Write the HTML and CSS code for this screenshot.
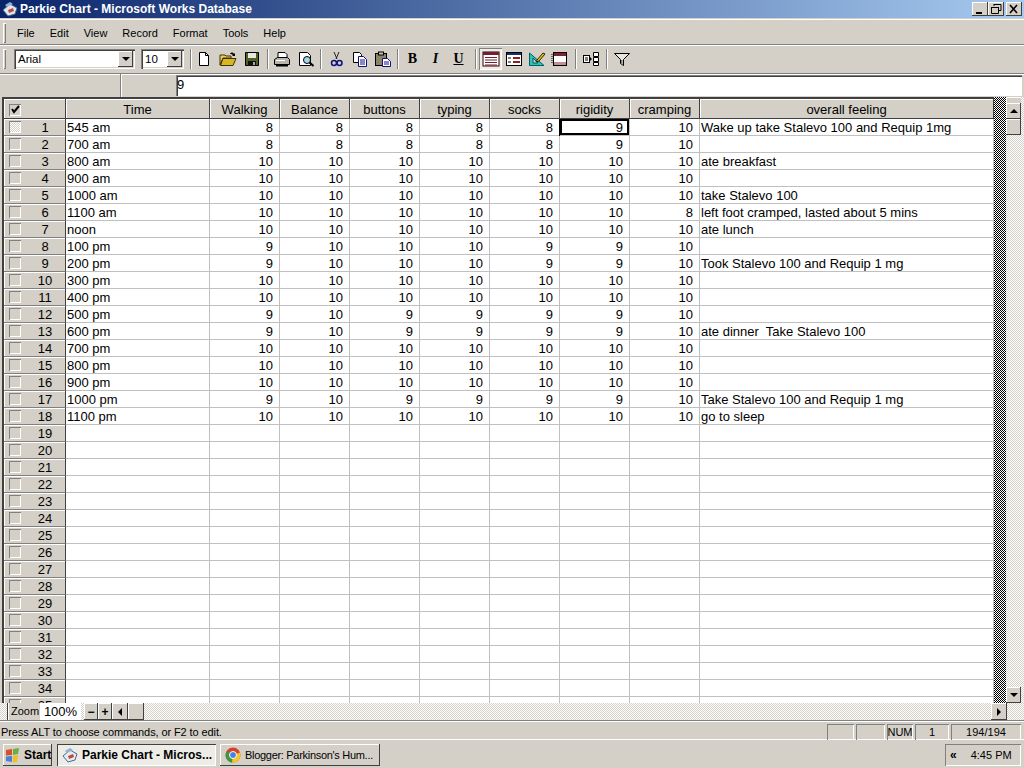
FILE: index.html
```html
<!DOCTYPE html>
<html lang="en">
<head>
<meta charset="utf-8">
<title>Parkie Chart - Microsoft Works Database</title>
<link rel="stylesheet" href="styles.css">
</head>
<body>
<div class="app">
  <header class="titlebar">
    <svg class="app-icon" viewBox="0 0 16 16"><path d="M1 9 8 3l7 4-2 6-7 2z" fill="#dfe6ee" stroke="#4a6a8a"/><path d="M3 4l5-3 3 2-6 3z" fill="#8fb0d0"/><path d="M6 9l5-2 1 3-5 2z" fill="#c04a3a"/></svg>
    <span class="title-text">Parkie Chart - Microsoft Works Database</span>
    <div class="win-btns">
      <span class="win-btn"><svg viewBox="0 0 16 14"><rect x="4" y="10" width="6" height="2" fill="#000"/></svg></span>
      <span class="win-btn"><svg viewBox="0 0 16 14"><path d="M6 2.500h7v6h-2M6 2v2M3.500 5.500h7v6h-7z" fill="none" stroke="#000"/><path d="M6 2h7v1H6zM3 5h8v1H3z"/></svg></span>
      <span class="win-btn win-btn-close"><svg viewBox="0 0 16 14"><path d="M4 3l7 8M11 3l-7 8" stroke="#000" stroke-width="1.600"/></svg></span>
    </div>
  </header>

  <nav class="menubar">
    <span class="grip"></span>
    <span class="menu-item m-file">File</span>
    <span class="menu-item">Edit</span>
    <span class="menu-item">View</span>
    <span class="menu-item">Record</span>
    <span class="menu-item">Format</span>
    <span class="menu-item">Tools</span>
    <span class="menu-item">Help</span>
  </nav>

  <div class="toolbar">
    <span class="grip"></span>
    <div class="combo combo-font"><span class="combo-val">Arial</span><span class="combo-arrow"><i></i></span></div>
    <div class="combo combo-size"><span class="combo-val">10</span><span class="combo-arrow"><i></i></span></div>
    <span class="sep sep-a"></span>
    <span class="tool t24"><svg viewBox="0 0 18 16"><path d="M4.500 1.500h6l3 3v10h-9z" fill="#fff" stroke="#000"/><path d="M10.500 1.500v3h3" fill="none" stroke="#000"/></svg></span>
    <span class="tool t24"><svg viewBox="0 0 18 16"><path d="M1 4h5l1 1h5v2H4l-3 7z" fill="#e8d060" stroke="#403000"/><path d="M1.500 14.500 4 7.500h13l-3 7z" fill="#d8b820" stroke="#403000"/><path d="M11 3c1-2 3-2 4 0l1-1v3h-3l1-1c-1-1-2-1-3-1z" fill="#000"/></svg></span>
    <span class="tool t24"><svg viewBox="0 0 18 16"><path d="M2.500 1.500h13v13h-13z" fill="#506020" stroke="#000"/><rect x="5" y="2" width="8" height="5" fill="#e8e8e0"/><rect x="5" y="10" width="8" height="5" fill="#111"/><rect x="10" y="11" width="2" height="3" fill="#aaa"/></svg></span>
    <span class="sep sep-b"></span>
    <span class="tool t24"><svg viewBox="0 0 18 16"><path d="M5 1.500h7l2 2v4H5z" fill="#fff" stroke="#000"/><path d="M1.500 8.500l3-2h10l2 2v5h-15z" fill="#b8b4ac" stroke="#000"/><path d="M3 14.500h12" stroke="#000" stroke-width="2"/><path d="M3 9.500h9" stroke="#fff"/></svg></span>
    <span class="tool t24"><svg viewBox="0 0 18 16"><path d="M2.500 1.500h8l3 3v10h-11z" fill="#fff" stroke="#000"/><circle cx="10" cy="9" r="3.500" fill="#a8d8e8" stroke="#000"/><path d="M12.500 11.500l4 3.500" stroke="#000" stroke-width="2"/></svg></span>
    <span class="sep sep-c"></span>
    <span class="tool"><svg viewBox="0 0 18 16"><path d="M6 1l3 7M11 1L8 8" stroke="#202020" fill="none"/><circle cx="6" cy="12" r="2.500" fill="none" stroke="#101080" stroke-width="1.500"/><circle cx="11.500" cy="12" r="2.500" fill="none" stroke="#101080" stroke-width="1.500"/></svg></span>
    <span class="tool"><svg viewBox="0 0 18 16"><path d="M2.500 1.500h6l2 2v8h-8z" fill="#fff" stroke="#000"/><path d="M7.500 5.500h5l3 3v7h-8z" fill="#fff" stroke="#101080"/><path d="M9 9h5M9 11h5M9 13h5" stroke="#101080"/></svg></span>
    <span class="tool"><svg viewBox="0 0 18 16"><rect x="1.500" y="2.500" width="11" height="12" fill="#8a8468" stroke="#000"/><rect x="4.500" y="1" width="5" height="3" fill="#c8c4b0" stroke="#000"/><path d="M8.500 7.500h5l3 3v5h-8z" fill="#fff" stroke="#101080"/><path d="M10 11h5M10 13h5" stroke="#101080"/></svg></span>
    <span class="sep sep-d"></span>
    <span class="tool fmt">B</span>
    <span class="tool fmt fmt-i">I</span>
    <span class="tool fmt fmt-u">U</span>
    <span class="sep sep-e"></span>
    <span class="tool tool-on"><svg viewBox="0 0 18 16"><rect x="1" y="1" width="16" height="14" fill="#fff" stroke="#300"/><rect x="1" y="1" width="16" height="3" fill="#702030"/><path d="M3 6.500h12M3 9h12M3 11.500h12M3 14h12" stroke="#702030"/></svg></span>
    <span class="tool"><svg viewBox="0 0 18 16"><rect x="1.500" y="1.500" width="15" height="13" fill="#fff" stroke="#000"/><rect x="2" y="2" width="14" height="2" fill="#103070"/><path d="M3 7h3M3 11h3" stroke="#000"/><path d="M8 7h7M8 11h7" stroke="#902020" stroke-width="2"/></svg></span>
    <span class="tool"><svg viewBox="0 0 18 16"><path d="M1.500 2v12.500H16L1.500 2z" fill="#30c0c0" stroke="#006060"/><path d="M5 12h5L5 7z" fill="#d4d0c8" stroke="#006060"/><path d="M9 9l6-7 2 1-6 7-3 1z" fill="#e8c020" stroke="#302000"/></svg></span>
    <span class="tool"><svg viewBox="0 0 18 16"><rect x="2.500" y="1.500" width="13" height="13" fill="#fff" stroke="#000"/><rect x="3" y="2" width="12" height="3" fill="#802030"/><rect x="3" y="11" width="12" height="3" fill="#c09090"/><path d="M1 3v10" stroke="#000" stroke-dasharray="1 1"/></svg></span>
    <span class="sep sep-f"></span>
    <span class="tool"><svg viewBox="0 0 18 16"><rect x="1.500" y="4.500" width="6" height="7" fill="#fff" stroke="#000"/><path d="M3 7h3M3 9h3" stroke="#000"/><path d="M8 6l2 2-2 2z" fill="#000"/><path d="M11.500 1.500h5v4h-5zM11.500 6.500h5v4h-5zM11.500 11.500h5v3h-5z" fill="#fff" stroke="#000"/></svg></span>
    <span class="sep sep-g"></span>
    <span class="tool"><svg viewBox="0 0 18 16"><path d="M1.500 2.500h15l-6 6v6l-3-2v-4z" fill="#e8e8e0" stroke="#000"/><path d="M8 9v4l1.500 1V9z" fill="#808080"/></svg></span>
  </div>

  <div class="formulabar">
    <span class="formula-div"></span>
    <div class="formula-field">9</div>
  </div>

  <div class="workarea">
    <div class="sheet">
      <table class="grid">
        <colgroup>
          <col class="c-head"><col class="c-time"><col class="c-num"><col class="c-num"><col class="c-num"><col class="c-num"><col class="c-num"><col class="c-num"><col class="c-num"><col class="c-note">
        </colgroup>
        <thead>
          <tr>
            <th class="corner"><span class="chk chk-on"><svg viewBox="0 0 11 11"><path d="M2 5l2 3 5-6" fill="none" stroke="#000" stroke-width="2"/></svg></span></th>
            <th>Time</th><th>Walking</th><th>Balance</th><th>buttons</th><th>typing</th><th>socks</th><th>rigidity</th><th>cramping</th><th>overall feeling</th>
          </tr>
        </thead>
        <tbody>
          <tr><th class="rh"><span class="chk chk-sel"></span><span class="rn">1</span></th><td>545 am</td><td class="n">8</td><td class="n">8</td><td class="n">8</td><td class="n">8</td><td class="n">8</td><td class="n sel">9</td><td class="n">10</td><td>Wake up take Stalevo 100 and Requip 1mg</td></tr>
          <tr><th class="rh"><span class="chk"></span><span class="rn">2</span></th><td>700 am</td><td class="n">8</td><td class="n">8</td><td class="n">8</td><td class="n">8</td><td class="n">8</td><td class="n">9</td><td class="n">10</td><td></td></tr>
          <tr><th class="rh"><span class="chk"></span><span class="rn">3</span></th><td>800 am</td><td class="n">10</td><td class="n">10</td><td class="n">10</td><td class="n">10</td><td class="n">10</td><td class="n">10</td><td class="n">10</td><td>ate breakfast</td></tr>
          <tr><th class="rh"><span class="chk"></span><span class="rn">4</span></th><td>900 am</td><td class="n">10</td><td class="n">10</td><td class="n">10</td><td class="n">10</td><td class="n">10</td><td class="n">10</td><td class="n">10</td><td></td></tr>
          <tr><th class="rh"><span class="chk"></span><span class="rn">5</span></th><td>1000 am</td><td class="n">10</td><td class="n">10</td><td class="n">10</td><td class="n">10</td><td class="n">10</td><td class="n">10</td><td class="n">10</td><td>take Stalevo 100</td></tr>
          <tr><th class="rh"><span class="chk"></span><span class="rn">6</span></th><td>1100 am</td><td class="n">10</td><td class="n">10</td><td class="n">10</td><td class="n">10</td><td class="n">10</td><td class="n">10</td><td class="n">8</td><td>left foot cramped, lasted about 5 mins</td></tr>
          <tr><th class="rh"><span class="chk"></span><span class="rn">7</span></th><td>noon</td><td class="n">10</td><td class="n">10</td><td class="n">10</td><td class="n">10</td><td class="n">10</td><td class="n">10</td><td class="n">10</td><td>ate lunch</td></tr>
          <tr><th class="rh"><span class="chk"></span><span class="rn">8</span></th><td>100 pm</td><td class="n">9</td><td class="n">10</td><td class="n">10</td><td class="n">10</td><td class="n">9</td><td class="n">9</td><td class="n">10</td><td></td></tr>
          <tr><th class="rh"><span class="chk"></span><span class="rn">9</span></th><td>200 pm</td><td class="n">9</td><td class="n">10</td><td class="n">10</td><td class="n">10</td><td class="n">9</td><td class="n">9</td><td class="n">10</td><td>Took Stalevo 100 and Requip 1 mg</td></tr>
          <tr><th class="rh"><span class="chk"></span><span class="rn">10</span></th><td>300 pm</td><td class="n">10</td><td class="n">10</td><td class="n">10</td><td class="n">10</td><td class="n">10</td><td class="n">10</td><td class="n">10</td><td></td></tr>
          <tr><th class="rh"><span class="chk"></span><span class="rn">11</span></th><td>400 pm</td><td class="n">10</td><td class="n">10</td><td class="n">10</td><td class="n">10</td><td class="n">10</td><td class="n">10</td><td class="n">10</td><td></td></tr>
          <tr><th class="rh"><span class="chk"></span><span class="rn">12</span></th><td>500 pm</td><td class="n">9</td><td class="n">10</td><td class="n">9</td><td class="n">9</td><td class="n">9</td><td class="n">9</td><td class="n">10</td><td></td></tr>
          <tr><th class="rh"><span class="chk"></span><span class="rn">13</span></th><td>600 pm</td><td class="n">9</td><td class="n">10</td><td class="n">9</td><td class="n">9</td><td class="n">9</td><td class="n">9</td><td class="n">10</td><td>ate dinner&nbsp; Take Stalevo 100</td></tr>
          <tr><th class="rh"><span class="chk"></span><span class="rn">14</span></th><td>700 pm</td><td class="n">10</td><td class="n">10</td><td class="n">10</td><td class="n">10</td><td class="n">10</td><td class="n">10</td><td class="n">10</td><td></td></tr>
          <tr><th class="rh"><span class="chk"></span><span class="rn">15</span></th><td>800 pm</td><td class="n">10</td><td class="n">10</td><td class="n">10</td><td class="n">10</td><td class="n">10</td><td class="n">10</td><td class="n">10</td><td></td></tr>
          <tr><th class="rh"><span class="chk"></span><span class="rn">16</span></th><td>900 pm</td><td class="n">10</td><td class="n">10</td><td class="n">10</td><td class="n">10</td><td class="n">10</td><td class="n">10</td><td class="n">10</td><td></td></tr>
          <tr><th class="rh"><span class="chk"></span><span class="rn">17</span></th><td>1000 pm</td><td class="n">9</td><td class="n">10</td><td class="n">9</td><td class="n">9</td><td class="n">9</td><td class="n">9</td><td class="n">10</td><td>Take Stalevo 100 and Requip 1 mg</td></tr>
          <tr><th class="rh"><span class="chk"></span><span class="rn">18</span></th><td>1100 pm</td><td class="n">10</td><td class="n">10</td><td class="n">10</td><td class="n">10</td><td class="n">10</td><td class="n">10</td><td class="n">10</td><td>go to sleep</td></tr>
          <tr><th class="rh"><span class="chk"></span><span class="rn">19</span></th><td></td><td></td><td></td><td></td><td></td><td></td><td></td><td></td><td></td></tr>
          <tr><th class="rh"><span class="chk"></span><span class="rn">20</span></th><td></td><td></td><td></td><td></td><td></td><td></td><td></td><td></td><td></td></tr>
          <tr><th class="rh"><span class="chk"></span><span class="rn">21</span></th><td></td><td></td><td></td><td></td><td></td><td></td><td></td><td></td><td></td></tr>
          <tr><th class="rh"><span class="chk"></span><span class="rn">22</span></th><td></td><td></td><td></td><td></td><td></td><td></td><td></td><td></td><td></td></tr>
          <tr><th class="rh"><span class="chk"></span><span class="rn">23</span></th><td></td><td></td><td></td><td></td><td></td><td></td><td></td><td></td><td></td></tr>
          <tr><th class="rh"><span class="chk"></span><span class="rn">24</span></th><td></td><td></td><td></td><td></td><td></td><td></td><td></td><td></td><td></td></tr>
          <tr><th class="rh"><span class="chk"></span><span class="rn">25</span></th><td></td><td></td><td></td><td></td><td></td><td></td><td></td><td></td><td></td></tr>
          <tr><th class="rh"><span class="chk"></span><span class="rn">26</span></th><td></td><td></td><td></td><td></td><td></td><td></td><td></td><td></td><td></td></tr>
          <tr><th class="rh"><span class="chk"></span><span class="rn">27</span></th><td></td><td></td><td></td><td></td><td></td><td></td><td></td><td></td><td></td></tr>
          <tr><th class="rh"><span class="chk"></span><span class="rn">28</span></th><td></td><td></td><td></td><td></td><td></td><td></td><td></td><td></td><td></td></tr>
          <tr><th class="rh"><span class="chk"></span><span class="rn">29</span></th><td></td><td></td><td></td><td></td><td></td><td></td><td></td><td></td><td></td></tr>
          <tr><th class="rh"><span class="chk"></span><span class="rn">30</span></th><td></td><td></td><td></td><td></td><td></td><td></td><td></td><td></td><td></td></tr>
          <tr><th class="rh"><span class="chk"></span><span class="rn">31</span></th><td></td><td></td><td></td><td></td><td></td><td></td><td></td><td></td><td></td></tr>
          <tr><th class="rh"><span class="chk"></span><span class="rn">32</span></th><td></td><td></td><td></td><td></td><td></td><td></td><td></td><td></td><td></td></tr>
          <tr><th class="rh"><span class="chk"></span><span class="rn">33</span></th><td></td><td></td><td></td><td></td><td></td><td></td><td></td><td></td><td></td></tr>
          <tr><th class="rh"><span class="chk"></span><span class="rn">34</span></th><td></td><td></td><td></td><td></td><td></td><td></td><td></td><td></td><td></td></tr>
          <tr><th class="rh"><span class="chk"></span><span class="rn">35</span></th><td></td><td></td><td></td><td></td><td></td><td></td><td></td><td></td><td></td></tr>
        </tbody>
      </table>
    </div>
    <div class="vscroll">
      <span class="vs-cap"></span>
      <span class="sb-btn"><i class="arr arr-up"></i></span>
      <span class="sb-btn"></span>
      <span class="vs-track"></span>
      <span class="sb-btn"><i class="arr arr-down"></i></span>
    </div>
  </div>

  <div class="hbar">
    <span class="hgrip"></span>
    <span class="zoom-label">Zoom</span>
    <span class="zoom-val">100%</span>
    <span class="sb-btn sb-h sb-minus"><i class="glyph">−</i></span>
    <span class="sb-btn sb-h"><i class="glyph">+</i></span>
    <span class="sb-btn sb-h sb-w"><i class="arr arr-left"></i></span>
    <span class="sb-btn sb-h sb-w"></span>
    <span class="hs-track"></span>
    <span class="sb-btn sb-h sb-w"><i class="arr arr-right"></i></span>
  </div>

  <footer class="statusbar">
    <span class="status-text">Press ALT to choose commands, or F2 to edit.</span>
    <span class="sbox s1"></span>
    <span class="sbox s2"></span>
    <span class="sbox s3">NUM</span>
    <span class="sbox s4">1</span>
    <span class="sbox s5">194/194</span>
  </footer>

  <div class="taskbar">
    <div class="task start"><svg class="flag" viewBox="0 0 16 16"><path d="M1 3l6-1v6l-6 .500z" fill="#d8502a"/><path d="M8 2l6-1-1 6-5 1z" fill="#6ab040"/><path d="M1 9.500l6-.500v6l-6-1z" fill="#4a80d8"/><path d="M8 9l5-1-1 7-4 .500z" fill="#f0c020"/></svg><span>Start</span></div>
    <div class="task task-on"><svg class="ticon" viewBox="0 0 16 16"><path d="M1 9 8 3l7 4-2 6-7 2z" fill="#e4ebf2" stroke="#4a6a8a"/><path d="M3 4l5-3 3 2-6 3z" fill="#8fb0d0"/><path d="M6 9l5-2 1 3-5 2z" fill="#c04a3a"/></svg><span>Parkie Chart - Micros...</span></div>
    <div class="task task-b"><svg class="ticon" viewBox="0 0 16 16"><circle cx="8" cy="8" r="7.500" fill="#d8402a"/><path d="M8 8 1.500 4.500A7.500 7.500 0 0 0 7 15.500z" fill="#3a9a40"/><path d="M8 8 7 15.500A7.500 7.500 0 0 0 15 5.500z" fill="#f0c828"/><circle cx="8" cy="8" r="3.500" fill="#4a80e0" stroke="#fff"/></svg><span>Blogger: Parkinson's Hum...</span></div>
    <div class="tray"><span class="tray-arrows">«</span><span class="clock">4:45 PM</span></div>
  </div>
</div>
</body>
</html>
```

FILE: styles.css
```css
* { box-sizing: border-box; }
html, body { margin: 0; padding: 0; }
body { width: 1024px; height: 768px; overflow: hidden; background: #d4d0c8; font-family: "Liberation Sans", Arial, sans-serif; color: #000; }
.app { width: 1024px; height: 768px; display: flex; flex-direction: column; background: #d4d0c8; }

.titlebar { height: 19px; display: flex; align-items: center; padding: 0 2px; background: linear-gradient(90deg, #0a246a 0%, #a6caf0 100%); border-bottom: 1px solid #d4d0c8; flex: none; }
.app-icon { width: 16px; height: 16px; flex: none; }
.title-text { margin-left: 2px; color: #fff; font: bold 12px "Liberation Sans", sans-serif; white-space: nowrap; }
.win-btns { margin-left: auto; display: flex; }
.win-btn { width: 16px; height: 14px; background: #d4d0c8; box-shadow: inset -1px -1px #404040, inset 1px 1px #fff; display: block; }
.win-btn svg { display: block; width: 16px; height: 14px; }
.win-btn-close { margin-left: 2px; }

.menubar { height: 26px; display: flex; align-items: center; padding: 1px 0 0 3px; border-top: 1px solid #fff; border-bottom: 1px solid #808080; flex: none; box-shadow: 0 1px #fff; font-size: 11px; }
.grip { width: 3px; height: 20px; flex: none; background: #d4d0c8; box-shadow: inset 1px 1px #fff, inset -1px -1px #808080; }
.menu-item { margin-right: 15px; white-space: nowrap; }
.m-file { margin-left: 11px; }

.toolbar { height: 28px; display: flex; align-items: center; padding: 0 0 2px 3px; margin-top: 1px; border-bottom: 1px solid #808080; flex: none; box-shadow: 0 1px #fff; }
.combo { height: 20px; display: flex; background: #fff; box-shadow: inset 1px 1px #808080, inset 2px 2px #404040, inset -1px -1px #fff, inset -2px -2px #d4d0c8; padding: 2px; flex: none; font-size: 11.500px; }
.combo-font { width: 121px; margin-left: 8px; }
.combo-size { width: 43px; margin-left: 6px; }
.combo-val { flex: 1; padding-left: 2px; line-height: 16px; }
.combo-arrow { width: 15px; display: flex; align-items: center; justify-content: center; background: #d4d0c8; box-shadow: inset -1px -1px #404040, inset 1px 1px #fff; }
.combo-arrow i { border: 4px solid transparent; border-top-color: #000; border-bottom-width: 0; }
.sep { width: 2px; height: 20px; flex: none; border-left: 1px solid #808080; border-right: 1px solid #fff; }
.sep-a { margin: 0 0 0 6px; }
.sep-b { margin: 0 1px 0 3px; }
.sep-c { margin: 0 3px 0 2px; }
.sep-d { margin: 0 2px 0 3px; }
.sep-e { margin: 0 2px 0 5px; }
.sep-f { margin: 0 2px 0 4px; }
.sep-g { margin: 0 2px 0 4px; }
.tool { width: 23px; height: 22px; flex: none; display: flex; align-items: center; justify-content: center; }
.t24 { width: 24px; }
.tool svg { width: 18px; height: 16px; display: block; }
.tool-on { background: #eeece6; box-shadow: inset 1px 1px #808080, inset -1px -1px #fff; }
.fmt { font-family: "Liberation Serif", serif; font-size: 14px; font-weight: bold; }
.fmt-i { font-style: italic; }
.fmt-u { text-decoration: underline; }

.formulabar { height: 23px; display: flex; flex: none; align-items: stretch; }
.formula-div { width: 2px; margin-left: 120px; border-left: 1px solid #808080; border-right: 1px solid #fff; }
.formula-field { width: 846px; margin: 1px 0 1px 54px; background: #fff; font-size: 13px; line-height: 20px; padding-left: 1px; box-shadow: inset 1px 1px #808080, inset 2px 2px #404040, inset -1px -1px #fff; }

.workarea { height: 606px; display: flex; flex: none; overflow: hidden; }
.sheet { width: 992px; height: 606px; margin-left: 2px; overflow: hidden; border-left: 2px solid #404040; border-top: 2px solid #404040; background: #fff; flex: none; }
.grid { table-layout: fixed; width: 990px; border-collapse: separate; border-spacing: 0; font-size: 13px; }
.c-head { width: 62px; }
.c-time { width: 144px; }
.c-num { width: 70px; }
.c-note { width: 294px; }
.grid thead th { height: 20px; padding: 1px 0 0; background: #d4d0c8; font-weight: normal; text-align: center; border-right: 1px solid #404040; border-bottom: 1px solid #404040; box-shadow: inset 1px 1px #fff; white-space: nowrap; }
.grid .corner { text-align: left; padding-left: 3px; }
.grid tbody tr { height: 17px; }
.grid td { height: 17px; padding: 2px 1px 0; line-height: 14px; border-right: 1px solid #c0c0c0; border-bottom: 1px solid #c0c0c0; white-space: nowrap; overflow: hidden; background: #fff; }
.grid td.n { text-align: right; padding-right: 6px; }
.grid td.sel { position: relative; box-shadow: inset 0 0 0 2px #000, -1px 0 #000; }
.rh { height: 17px; padding: 0; background: #d4d0c8; font-weight: normal; border-right: 1px solid #404040; border-bottom: 1px solid #808080; box-shadow: inset 1px 1px #fff; display: flex; align-items: center; }
.chk { width: 12px; height: 12px; margin-left: 5px; flex: none; display: block; background: #d4d0c8; box-shadow: inset 1px 1px #808080, inset -1px -1px #fff; }
.chk-sel { background: repeating-conic-gradient(#d4d0c8 0 25%, #fff 0 50%) 0 0 / 2px 2px; }
.chk svg { display: block; width: 11px; height: 11px; margin: 1px; }
.corner .chk { margin-left: 2px; }
.rn { width: 34px; margin-left: 7px; text-align: center; }

.vscroll { width: 30px; flex: none; display: flex; flex-direction: column; align-items: flex-end; padding-right: 3px; background: repeating-conic-gradient(#d4d0c8 0 25%, #fff 0 50%) 0 0 / 2px 2px; position: relative; }
.vs-cap { width: 15px; height: 6px; background: #d4d0c8; box-shadow: inset 1px 1px #fff; flex: none; }
.vs-track { flex: 1; }
.vscroll::before { content: ""; position: absolute; left: 0; top: 0; bottom: 0; width: 12px; background: repeating-conic-gradient(#000 0 25%, #fff 0 50%) 0 0 / 2px 2px; }
.sb-btn { width: 15px; height: 16px; flex: none; background: #d4d0c8; box-shadow: inset -1px -1px #404040, inset 1px 1px #fff; display: flex; align-items: center; justify-content: center; }
.arr { display: block; width: 0; height: 0; border: 4px solid transparent; }
.arr-up { border-bottom-color: #000; border-top-width: 0; }
.arr-down { border-top-color: #000; border-bottom-width: 0; }
.arr-left { border-right-color: #000; border-left-width: 0; }
.arr-right { border-left-color: #000; border-right-width: 0; }

.hbar { height: 17px; display: flex; align-items: stretch; flex: none; background: repeating-conic-gradient(#d4d0c8 0 25%, #fff 0 50%) 0 0 / 2px 2px; padding-left: 7px; padding-right: 17px; font-size: 11px; }
.hgrip { width: 2px; background: #d4d0c8; border-left: 1px solid #404040; border-right: 1px solid #fff; }
.zoom-label { width: 31px; padding-left: 2px; background: #d4d0c8; line-height: 17px; }
.zoom-val { width: 41px; background: #fff; font-size: 13px; line-height: 17px; text-align: center; }
.sb-h { height: 17px; width: 14px; }
.sb-minus { margin-left: 3px; }
.sb-w { width: 16px; }
.glyph { font-style: normal; font-weight: bold; font-size: 12px; line-height: 1; }
.hs-track { flex: 1; }

.statusbar { height: 20px; display: flex; align-items: center; flex: none; border-top: 1px solid #808080; box-shadow: inset 0 1px #fff; border-bottom: 1px solid #fff; padding-top: 3px; font-size: 11px; }
.status-text { width: 827px; padding-left: 1px; white-space: nowrap; letter-spacing: -0.1px; }
.sbox { height: 16px; flex: none; text-align: center; line-height: 16px; box-shadow: inset 1px 1px #808080, inset -1px -1px #fff; margin-right: 2px; }
.s1 { width: 27px; }
.s2 { width: 29px; }
.s3 { width: 26px; }
.s4 { width: 34px; }
.s5 { width: 70px; }

.taskbar { flex: 1; display: flex; align-items: center; padding: 2px 0 0 3px; font-size: 11px; }
.task { height: 22px; display: flex; align-items: center; flex: none; white-space: nowrap; box-shadow: inset -1px -1px #404040, inset 1px 1px #fff; }
.start { width: 49px; padding-left: 2px; font-size: 12px; font-weight: bold; gap: 3px; }
.flag { width: 16px; height: 16px; flex: none; }
.task-on { width: 159px; margin-left: 5px; padding-left: 5px; font-size: 12px; font-weight: bold; gap: 4px; background: #eeece6; box-shadow: inset 1px 1px #404040, inset -1px -1px #fff; }
.task-b { width: 160px; margin-left: 4px; padding-left: 5px; gap: 4px; letter-spacing: -0.3px; }
.ticon { width: 16px; height: 16px; flex: none; }
.tray { margin-left: auto; margin-right: 3px; width: 76px; height: 22px; display: flex; align-items: center; box-shadow: inset 1px 1px #808080, inset -1px -1px #fff; }
.tray-arrows { margin-left: 5px; font-size: 12px; font-weight: bold; }
.clock { margin-left: 14px; }
```
